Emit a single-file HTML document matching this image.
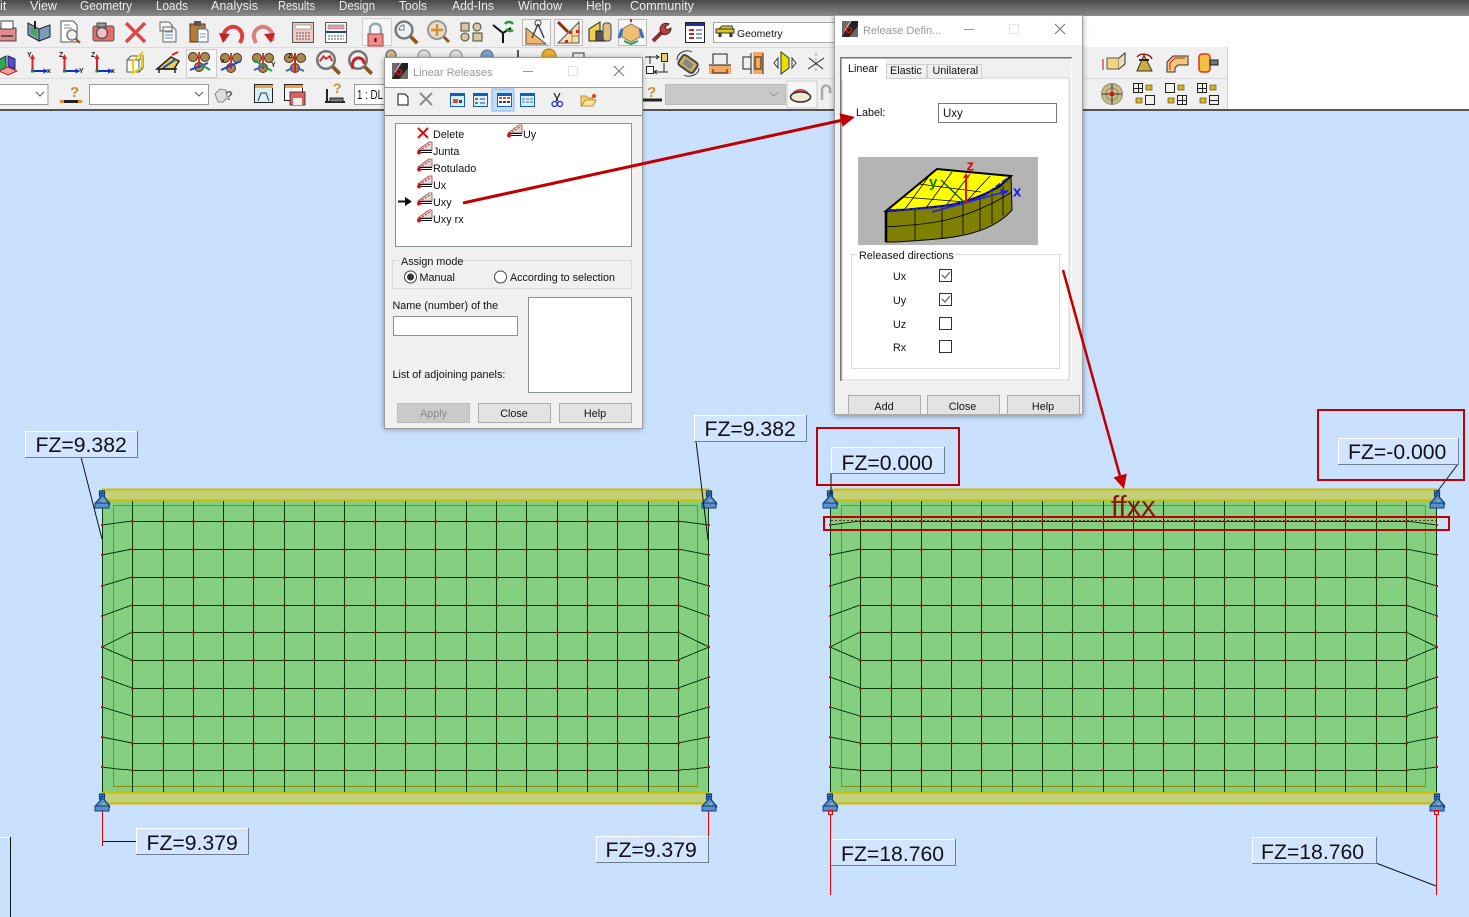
<!DOCTYPE html>
<html><head><meta charset="utf-8"><title>Linear Releases</title>
<style>
html,body{margin:0;padding:0;background:#cae0ff;overflow:hidden}
svg{display:block;font-family:"Liberation Sans",sans-serif}
.m{font-size:12.7px;fill:#ececec}
.t{font-size:10.8px;fill:#111}
.g{font-size:11px;fill:#9a9a9a}
.l{font-size:21.2px;fill:#111}
.a{font-size:7px;font-weight:bold;fill:#222}
.cr{shape-rendering:crispEdges}
</style></head><body>
<svg width="1469" height="917" viewBox="0 0 1469 917" xmlns="http://www.w3.org/2000/svg">
<defs>
<linearGradient id="bar" x1="0" y1="0" x2="0" y2="1"><stop offset="0" stop-color="#484848"/><stop offset="1" stop-color="#8c8c8c"/></linearGradient>
<g id="sup">
<path d="M-2.500-9h5v5h-1l6 7v1.500h-14V3l6-7h-2z" fill="#5b8fc9" stroke="#0b3f86" stroke-width="1.200"/>
<rect x="-7" y="3" width="14" height="5" fill="#5b8fc9" stroke="#0b3f86" stroke-width="1.200" class="cr"/><path d="M0 1h3" stroke="#e6d040" class="cr"/>
<path d="M-2.500-6.500h5M0-9v5" stroke="#0b3f86" class="cr"/>
</g>
<g id="mesh">
<rect x="102" y="500" width="607" height="292" fill="#85d080"/>
<rect x="102.500" y="489.500" width="606" height="11" fill="#c4cf7e" stroke="#c8be00" stroke-width="2" class="cr"/>
<rect x="102.500" y="792.500" width="606" height="11" fill="#c4cf7e" stroke="#c8be00" stroke-width="2" class="cr"/>
<rect x="113.500" y="505.500" width="584" height="281" fill="none" stroke="#8a8a10" class="cr"/>
<path class="cr" fill="none" stroke="#003a08" d="M102.500 501V792M708.500 501V792M132.500 501V792M163.500 501V792M193.500 501V792M223.500 501V792M253.500 501V792M284.500 501V792M314.500 501V792M344.500 501V792M375.500 501V792M405.500 501V792M435.500 501V792M466.500 501V792M496.500 501V792M526.500 501V792M557.500 501V792M587.500 501V792M617.500 501V792M648.500 501V792M678.500 501V792M132 521.500H679M132 549.500H679M132 577.500H679M132 605.500H679M132 632.500H679M132 660.500H679M132 688.500H679M132 716.500H679M132 743.500H679M132 770.500H679M102 525 132 521M102 555 132 549M102 586 132 577M102 616 132 605M102 647 132 632M102 647 132 660M102 677 132 688M102 707 132 716M102 737 132 743M102 767 117 769 132 770M709 525 678 521M709 555 678 549M709 586 678 577M709 616 678 605M709 647 678 632M709 647 678 660M709 677 678 688M709 707 678 716M709 737 678 743M709 767 694 769 678 770"/>
<path class="cr" fill="none" stroke="#f00000" stroke-width="2" stroke-dasharray="2.400 27.950" d="M131.200 521.500H680M131.200 549.500H680M131.200 577.500H680M131.200 605.500H680M131.200 632.500H680M131.200 660.500H680M131.200 688.500H680M131.200 716.500H680M131.200 743.500H680M131.200 770.500H680"/>
<path class="cr" fill="none" stroke="#f00000" stroke-width="2" d="M101 525h2M101 555h2M101 586h2M101 616h2M101 647h2M101 677h2M101 707h2M101 737h2M101 767h2M708 525h2M708 555h2M708 586h2M708 616h2M708 647h2M708 677h2M708 707h2M708 737h2M708 767h2"/>
<use href="#sup" x="102" y="500"/><use href="#sup" x="709" y="500"/><use href="#sup" x="102" y="803"/><use href="#sup" x="709" y="803"/>
</g>
<g id="mag"><path d="M4 4l7 7" stroke="#8a5a20" stroke-width="3"/><circle r="7" fill="#eef3f6" stroke="#777" stroke-width="2"/></g>
<g id="ax"><path d="M0 0V-14" stroke="#e02020" stroke-width="2"/><path d="M-2.500-12L0-17l2.500 5z" fill="#e02020"/><path d="M0 0H13" stroke="#1030d0" stroke-width="2"/><path d="M11-2.500L16 0l-5 2.500z" fill="#1030d0"/><rect x="-1.500" y="-1.500" width="3" height="3" fill="#0a9030"/></g>
<g id="gears"><circle cx="-6" cy="-5" r="4.500" fill="#a88a50" stroke="#4a3010"/><circle cx="6" cy="-5" r="4.500" fill="#a88a50" stroke="#4a3010"/><circle cx="0" cy="5" r="4.500" fill="#a88a50" stroke="#4a3010"/><path d="M0-10V6" stroke="#e02020" stroke-width="1.800"/></g>
<g id="rel"><path d="M1 8L12 0h3v8z" fill="#dcdcdc" stroke="#a04040" stroke-width=".8"/><path d="M2 8.500H15M2 10.500H15" stroke="#111" stroke-width="1"/><path d="M5 7l8-5" stroke="#e02020" stroke-dasharray="2 1.500"/><circle cx="2" cy="10.500" r="2" fill="#e01010"/></g>
<g id="dlgi"><rect width="16" height="16" fill="#6a6a6a"/><path d="M0 16L9 0h7v5L7 16z" fill="#222"/><path d="M3 9L9 0" stroke="#ddd"/><circle cx="7" cy="9" r="2.500" fill="none" stroke="#e01010" stroke-width="1.600"/></g>
<g id="split"><g fill="none" stroke="#222" class="cr"><rect x="-10.500" y="-10.500" width="9" height="9"/><rect x="1.500" y="1.500" width="9" height="9"/></g><rect x="2" y="-9" width="6" height="5" fill="#d8b030" stroke="#6a5010" stroke-width=".7"/><rect x="-8" y="4" width="6" height="5" fill="#d8b030" stroke="#6a5010" stroke-width=".7"/></g>
</defs>

<rect width="1469" height="917" fill="#cae0ff"/>

<!-- toolbars -->
<rect y="16" width="1469" height="94" fill="#fff"/>
<rect y="16" width="836" height="31" fill="#f0f0f0"/>
<rect y="47" width="1228" height="63" fill="#f0f0f0"/>
<path class="cr" d="M0 47.500H836M0 78.500H1228" stroke="#dcdcdc"/>
<path class="cr" d="M1227.500 47V110" stroke="#d0d0d0"/>
<rect y="109" width="1469" height="2" fill="#555"/>
<rect width="1469" height="16" fill="url(#bar)"/>
<g lengthAdjust="spacingAndGlyphs">
<text class="m" x="0" y="10">it</text>
<text class="m" x="30" y="10" textLength="27" lengthAdjust="spacingAndGlyphs">View</text>
<text class="m" x="80" y="10" textLength="52" lengthAdjust="spacingAndGlyphs">Geometry</text>
<text class="m" x="156" y="10" textLength="32" lengthAdjust="spacingAndGlyphs">Loads</text>
<text class="m" x="211" y="10" textLength="47" lengthAdjust="spacingAndGlyphs">Analysis</text>
<text class="m" x="278" y="10" textLength="37" lengthAdjust="spacingAndGlyphs">Results</text>
<text class="m" x="339" y="10" textLength="36" lengthAdjust="spacingAndGlyphs">Design</text>
<text class="m" x="399" y="10" textLength="28" lengthAdjust="spacingAndGlyphs">Tools</text>
<text class="m" x="452" y="10" textLength="42" lengthAdjust="spacingAndGlyphs">Add-Ins</text>
<text class="m" x="518" y="10" textLength="44" lengthAdjust="spacingAndGlyphs">Window</text>
<text class="m" x="586" y="10" textLength="25" lengthAdjust="spacingAndGlyphs">Help</text>
<text class="m" x="630" y="10" textLength="64" lengthAdjust="spacingAndGlyphs">Community</text>
</g>

<!-- row 1 -->
<g>
<rect x="362.500" y="18.500" width="29" height="27" fill="#f6f6f6" stroke="#d0d0d0" class="cr"/>
<rect x="522.500" y="19.500" width="28" height="26" fill="#f6f6f6" stroke="#bbb" class="cr"/><rect x="554.500" y="19.500" width="28" height="26" fill="#f6f6f6" stroke="#bbb" class="cr"/><rect x="618.500" y="19.500" width="28" height="26" fill="#f6f6f6" stroke="#bbb" class="cr"/>
<rect x="-2" y="28" width="18" height="13" fill="#e48a8a" stroke="#444"/><rect x="1" y="21" width="12" height="8" fill="#fff" stroke="#444"/><rect x="1" y="35" width="12" height="2" fill="#555"/>
<path d="M39 41L28 35V23l11 6zM39 41l11-4V25l-11 4z" fill="#7b9cb8" stroke="#222"/><path d="M31 27l6 3v7l-6-3z" fill="#50a060"/><path d="M35 21v8" stroke="#222" stroke-width="2"/>
<path d="M61 21h12l4 4v17H61z" fill="#fff" stroke="#555"/><path d="M64 25h6M64 28h8" stroke="#888"/><g transform="translate(72 35) scale(.72)"><use href="#mag"/></g>
<rect x="93" y="26" width="21" height="15" rx="2" fill="#e66c6c" stroke="#555"/><rect x="97" y="23" width="9" height="4" fill="#999" stroke="#444"/><circle cx="102" cy="33" r="5.500" fill="#f3c0c0" stroke="#555" stroke-width="1.500"/>
<path d="M126 23l19 19M145 23l-19 19" stroke="#e04848" stroke-width="3.500"/>
<path d="M160 22h9l3 3v6h-12zM163 27h10l3 3v12h-13z" fill="#f4f4f4" stroke="#666"/><path d="M165 32h8M165 35h8M165 38h8" stroke="#7b8ea8"/>
<rect x="190" y="24" width="15" height="18" fill="#b77b3a" stroke="#4a3010"/><rect x="194" y="21" width="7" height="5" fill="#555"/><path d="M198 29h8l2 2v11h-10z" fill="#fff" stroke="#4a6a8a"/><path d="M200 34h6M200 37h6" stroke="#7b8ea8"/>
<path d="M224 41c-4-14 14-20 18-7 1 3-1 7-2 9" fill="none" stroke="#d84040" stroke-width="4"/><path d="M219 33l11 1-7 9z" fill="#c02828"/>
<path d="M272 41c4-14-14-20-18-7-1 3 1 7 2 9" fill="none" stroke="#d88080" stroke-width="4"/><path d="M275 33l-11 1 7 9z" fill="#c02828"/>
<rect x="292.500" y="22.500" width="21" height="20" fill="#f2c8c8" stroke="#555" class="cr"/><rect x="295" y="25" width="16" height="4" fill="#fff" stroke="#777" stroke-width=".6"/><path d="M296 33h14M296 36h14M296 39h14" stroke="#555" stroke-dasharray="2 1"/>
<rect x="325.500" y="22.500" width="21" height="20" fill="#fff" stroke="#555" class="cr"/><rect x="328" y="25" width="16" height="4" fill="#e8a0a0" stroke="#777" stroke-width=".6"/><path d="M326 32h20" stroke="#2040a0" stroke-width="2"/><path d="M328 36h16M328 39h16" stroke="#555" stroke-dasharray="2 1"/>
<path d="M370 35v-6c0-7 11-7 11 0v6" fill="none" stroke="#98a8b0" stroke-width="2.500"/><rect x="368" y="34" width="15" height="12" fill="#ec8c8c" stroke="#a04040"/><rect x="374.500" y="38" width="2" height="4" fill="#600"/>
<g transform="translate(404 30) scale(1.200)"><use href="#mag"/></g><path d="M399 30a5 5 0 0 1 5-5v5z" fill="none" stroke="#777"/>
<g transform="translate(437 30)"><path d="M5 5l7 7" stroke="#8a5a20" stroke-width="3"/><circle r="9" fill="#e8dccd" stroke="#999" stroke-width="2"/><path d="M-6 0H6M0-6V6" stroke="#d8902a" stroke-width="2.500"/></g>
<g fill="#d8c8a0" stroke="#444"><rect x="461" y="23" width="8" height="8"/><circle cx="477" cy="27" r="4"/><circle cx="465" cy="37" r="4"/><rect x="473" y="33" width="9" height="8"/></g>
<path d="M493 25l10 8 8-5M503 33v10" fill="none" stroke="#111" stroke-width="2"/><path d="M505 24a5 5 0 0 1 8 0" fill="none" stroke="#20a030" stroke-width="2.500"/><path d="M513 30a5 5 0 0 1-7-1" fill="none" stroke="#20a030" stroke-width="2.500"/>
<path d="M526 44V28l20 16z" fill="#f2b868" stroke="#555"/><path d="M538 24l-6 14M538 24l6 14" stroke="#444" stroke-width="1.500"/><circle cx="538" cy="23" r="3" fill="none" stroke="#444"/>
<path d="M558 43l21-21v21z" fill="#f3e0b0" stroke="#555"/><path d="M558 22l10 10" stroke="#8a3010" stroke-width="3"/><path d="M572 36h7M572 29v14" stroke="#a88040"/><g fill="#e02020"><rect x="569" y="31" width="3" height="3"/><rect x="576" y="30" width="3" height="3"/><rect x="565" y="40" width="3" height="3"/></g>
<path d="M589 41V29l11-7v19z" fill="#f0d050" stroke="#222"/><rect x="596" y="31" width="9" height="10" fill="#555" stroke="#222"/><rect x="603" y="23" width="8" height="18" rx="3" fill="#e0c080" stroke="#444"/>
<path d="M631 24l-9 5v8l9 5 9-5v-8z" fill="#f0c070" stroke="#777"/><path d="M622 29l-3 9M640 29l3 9" stroke="#3070d0" stroke-width="3"/><path d="M624 41l7 3 7-3" stroke="#30a040" stroke-width="2" fill="none"/><path d="M631 22v-3" stroke="#e02020" stroke-width="2"/>
<path d="M653 41l9-9" stroke="#8a3030" stroke-width="4"/><path d="M660 30c0-6 5-8 9-6l-4 3 2 3 4-2c0 5-5 8-9 6z" fill="#b84040" stroke="#502020"/>
<rect x="685.500" y="22.500" width="19" height="20" fill="#fff" stroke="#222" class="cr"/><rect x="686" y="23" width="18" height="3" fill="#2030a0"/><path d="M689 30h5M689 34h5M689 38h5" stroke="#d02020" stroke-width="2"/><path d="M696 30h6M696 34h6M696 38h6" stroke="#2030a0"/>
<rect x="713.500" y="22.500" width="130" height="20" fill="#fff" stroke="#aaa" class="cr"/>
<path d="M719 29l3-3h10l1 3z" fill="#e0d030" stroke="#333"/><rect x="716" y="29" width="18" height="4" fill="#d8c820" stroke="#333"/><path d="M720 33v4M731 33v4" stroke="#333" stroke-width="3"/>
<text x="737" y="37" style="font-size:10.400px" fill="#111">Geometry</text>
</g>

<!-- row 2 -->
<g>
<rect x="186.500" y="49.500" width="30" height="28" fill="#f6f6f6" stroke="#ccc" class="cr"/>
<path d="M-2 60l8-4v12l-8 3z" fill="#30a850" stroke="#226"/><path d="M8 56l7 3v10l-7-3z" fill="#5050d0" stroke="#226"/><path d="M-1 71l9-4 9 4-9 4z" fill="#f0a0a0" stroke="#c02020"/>
<use href="#ax" x="32.500" y="71"/><text class="a" x="27" y="57">Y</text><text class="a" x="47" y="73">x</text>
<use href="#ax" x="64.500" y="71"/><text class="a" x="59" y="57">Z</text><text class="a" x="79" y="73">Y</text>
<use href="#ax" x="97" y="71"/><text class="a" x="91" y="57">Z</text><text class="a" x="111" y="73">x</text>
<path d="M127 60h12v12h-12zM139 60l4-4v12l-4 4M127 60l4-4h12" fill="#fff" stroke="#555"/><path d="M133 61l9-8v14l-9 6z" fill="none" stroke="#e8d020" stroke-width="2"/>
<path d="M157 69l14-12 8 4-5 8z" fill="#f0d040" stroke="#222" stroke-width="1.500"/><path d="M163 68l13-9" stroke="#2050d0" stroke-width="2"/><path d="M172 55l6-3" stroke="#e02020" stroke-width="2"/><path d="M157 69h20M159 69v4M175 69v4" stroke="#222" stroke-width="1.500"/>
<use href="#gears" x="199" y="62"/><path d="M190 70l18-7" stroke="#2040d0" stroke-width="2"/><path d="M202 65l8 5" stroke="#20a040" stroke-width="2"/>
<use href="#gears" x="231" y="63"/><path d="M221 70l20-9" stroke="#2040d0" stroke-width="2"/><text class="a" x="221" y="63">x</text>
<use href="#gears" x="263" y="63"/><path d="M254 60l18 11" stroke="#20a040" stroke-width="2"/><path d="M254 70l10-4" stroke="#5060d0" stroke-width="2"/><text class="a" x="271" y="67">Y</text>
<use href="#gears" x="295" y="63"/><path d="M295 54V73" stroke="#e02020" stroke-width="2"/><path d="M286 71l7-3M304 71l-7-3" stroke="#4060c0" stroke-width="2"/><text class="a" x="288" y="58">Z</text>
<g transform="translate(326 60) scale(1.250)"><use href="#mag"/><path d="M-5 1l3-4 2 2 3-2 2 4" fill="none" stroke="#e02020" stroke-width="1.500"/></g>
<g transform="translate(358 60) scale(1.250)"><use href="#mag"/><path d="M-4 7c-3-9 8-12 9-4" fill="none" stroke="#d02020" stroke-width="2.500"/></g>
<circle cx="391" cy="55" r="5" fill="#cdb78e" stroke="#555"/>
<circle cx="424" cy="56" r="6" fill="#ddd" stroke="#888"/><circle cx="456" cy="56" r="6" fill="#ddd" stroke="#888"/><circle cx="487" cy="56" r="6" fill="#7aa0d0" stroke="#666"/><path d="M518 50v7" stroke="#555" stroke-width="2"/><circle cx="549" cy="56" r="7" fill="#e8b030" stroke="#a07010"/><rect x="573" y="53" width="11" height="5" fill="none" stroke="#333"/>
<path d="M645 57h13M656 55l3 2-3 2M668 72h-13M657 70l-3 2 3 2M650 56v8M664 63v9" stroke="#222" fill="none"/><rect x="661.500" y="53.500" width="6" height="8" fill="#e8d070" stroke="#222" class="cr"/><rect x="646.500" y="66.500" width="7" height="7" fill="#fff" stroke="#222" class="cr"/>
<g transform="translate(688 64) rotate(35)"><rect x="-9" y="-6" width="18" height="12" rx="3" fill="#c8b060" stroke="#444" stroke-width="2"/><rect x="-5" y="-3" width="10" height="6" fill="#888"/></g><path d="M677 60c0-8 10-11 15-8M699 68c0 7-10 10-15 7" fill="none" stroke="#333"/>
<rect x="709" y="65" width="22" height="9" fill="#f6a860"/><path d="M713 64V54h14v10M709 65h22M713 69v4h14v-4" fill="none" stroke="#222"/>
<rect x="753" y="52" width="10" height="22" fill="#f6a860"/><path d="M743 57h8v12h-8zM755 57h6v12h-6z" fill="none" stroke="#222"/><path d="M751 53v21M763 53v21" stroke="#222"/>
<path d="M781 52l8 6v10l-8 6z" fill="#e8e000" stroke="#333"/><path d="M778 58l-4 5 4 5zM792 58l4 5-4 5z" fill="#fff" stroke="#333"/>
<path d="M816 53v20" stroke="#999" stroke-dasharray="3 2"/><path d="M808 69l16-11M809 58l14 11" stroke="#222"/>
<rect x="1107" y="58" width="12" height="11" fill="#ecd880" stroke="#555"/><path d="M1119 58l6-5v11l-6 5" fill="#e8e0c0" stroke="#333"/><path d="M1103 59v11" stroke="#902020"/>
<path d="M1137 71l7-16 8 16z" fill="#c8b040" stroke="#333"/><path d="M1137 57c4-5 13-3 15 2" fill="none" stroke="#a02020" stroke-width="1.500"/><path d="M1139 60h10" stroke="#402020" stroke-width="2"/>
<path d="M1167 72V62l6-6h15v9h-10l-3 3v4z" fill="#f4c878" stroke="#333"/><path d="M1170 70v-7l5-5h10" fill="none" stroke="#c02020"/>
<rect x="1199" y="54" width="11" height="18" rx="3" fill="#f0c040" stroke="#e03020" stroke-width="1.500"/><rect x="1210" y="60" width="8" height="5" fill="#777" stroke="#222"/>
</g>

<!-- row 3 -->
<g>
<rect x="-3" y="84.500" width="51" height="20" fill="#fff" stroke="#999" class="cr"/><path d="M36 92l4 4 4-4" fill="none" stroke="#555"/>
<rect x="60" y="100" width="22" height="3" fill="#222"/><rect x="60" y="100" width="4" height="3" fill="#e8902a"/><rect x="78" y="100" width="4" height="3" fill="#e8902a"/><text x="70" y="97" style="font-size:15px;font-weight:bold" fill="#d09020">?</text>
<rect x="89.500" y="84.500" width="119" height="20" fill="#fff" stroke="#999" class="cr"/><path d="M195 92l4 4 4-4" fill="none" stroke="#555"/>
<path d="M215 94l5-5 6 1 1 8-4 4h-5z" fill="#ddd" stroke="#888"/><text x="225" y="100" style="font-size:13px;font-weight:bold" fill="#666">?</text>
<rect x="254.500" y="84.500" width="18" height="18" fill="#d8eef8" stroke="#222" class="cr"/><rect x="255" y="85" width="18" height="3" fill="#f0a040"/><path d="M258 101l3-8h5l3 8" fill="none" stroke="#333"/>
<rect x="284.500" y="84.500" width="18" height="16" fill="#f6f6f6" stroke="#222" class="cr"/><rect x="285" y="85" width="18" height="3" fill="#f0a040"/><rect x="290" y="92" width="15" height="13" fill="#e06060" stroke="#444"/><rect x="293" y="98" width="9" height="7" fill="#eee"/>
<path d="M325 102h20M327 89v13" stroke="#222" stroke-width="2"/><rect x="330" y="98" width="13" height="4" fill="#777" stroke="#222"/><text x="333" y="93" style="font-size:14px;font-weight:bold" fill="#d09020">?</text>
<rect x="354.500" y="84.500" width="40" height="20" fill="#fff" stroke="#999" class="cr"/><text x="357" y="99" style="font-size:12.500px" fill="#111" textLength="26" lengthAdjust="spacingAndGlyphs">1 : DL</text>
<path d="M643 100h19" stroke="#222" stroke-width="3"/><text x="647" y="97" style="font-size:15px;font-weight:bold" fill="#d09020">?</text>
<rect x="665.500" y="84.500" width="120" height="20" fill="#c8c8c8" stroke="#bbb" class="cr"/><path d="M770 92l4 4 4-4" fill="none" stroke="#999"/>
<rect x="787" y="81" width="30" height="27" fill="#f6f6f6" stroke="#ccc"/><path d="M792 95a9 8 0 0 1 17 0z" fill="#f06060" stroke="#a02020"/><ellipse cx="800.500" cy="97" rx="10" ry="5" fill="#f0e8d0" stroke="#333" stroke-width="1.600"/>
<path d="M822 100V90c0-6 8-6 8 0v3" fill="none" stroke="#aaa" stroke-width="2.500"/>
<circle cx="1112" cy="94" r="10.500" fill="#c8bc80" stroke="#888"/><circle cx="1112" cy="94" r="6" fill="none" stroke="#888"/><path d="M1102 94h20M1112 84v20" stroke="#333"/><rect x="1110" y="92" width="4" height="4" fill="#e01010"/>
<use href="#split" x="1144" y="94"/><use href="#split" x="1176" y="94"/><use href="#split" x="1208" y="94"/>
<path class="cr" d="M1133 88.500h10M1138.500 83v10M1177 100.500h10M1182.500 95v10M1197 88.500h10M1202.500 83v10M1209 100.500h10" stroke="#222"/>
</g>

<!-- canvas panels -->
<use href="#mesh"/>
<use href="#mesh" x="728"/>
<path d="M831 520.500H1437" stroke="#902020" stroke-dasharray="2 2" class="cr"/>

<!-- leader lines -->
<g fill="none" stroke="#111">
<path d="M81 457L102 539M696 441L708 540M831 473V495M1458 464L1437 492M102 841.500H136M1376 863L1436 886"/>
</g>
<g stroke="#f00000" fill="none">
<path d="M102.500 811V846M708.500 811V848M830.500 815V895M1436.500 815V895"/>
<rect x="828.500" y="810.500" width="4" height="4"/><rect x="1434.500" y="810.500" width="4" height="4"/>
</g>
<path d="M10.500 837V917" stroke="#111" class="cr" fill="none"/>
<path d="M0 837.500H10" stroke="#fff" class="cr"/>

<!-- labels -->
<g fill="#d2e4ff" stroke="none">
<rect x="25" y="431" width="112" height="26"/><rect x="694" y="415" width="112" height="26"/><rect x="831" y="447" width="113" height="26"/><rect x="1338" y="438" width="120" height="26"/><rect x="136" y="828" width="112" height="26"/><rect x="596" y="836" width="112" height="26"/><rect x="831" y="839" width="124" height="26"/><rect x="1252" y="837" width="124" height="26"/>
</g>
<g class="cr" fill="none" stroke="#fff">
<path d="M25.500 457V431.500H137M694.500 441V415.500H806M831.500 473V447.500H944M1338.500 464V438.500H1458M136.500 854V828.500H248M596.500 862V836.500H708M831.500 865V839.500H955M1252.500 863V837.500H1376"/>
</g>
<g class="cr" fill="none" stroke="#6f7f90">
<path d="M25 457.500H137.500V431M694 441.500H806.500V415M831 473.500H944.500V447M1338 464.500H1458.500V438M136 854.500H248.500V828M596 862.500H708.500V836M831 865.500H955.500V839M1252 863.500H1376.500V837"/>
</g>
<text class="l" x="35.500" y="452">FZ=9.382</text>
<text class="l" x="704.500" y="436">FZ=9.382</text>
<text class="l" x="841.500" y="470">FZ=0.000</text>
<text class="l" x="1348" y="459">FZ=-0.000</text>
<text class="l" x="146.500" y="850">FZ=9.379</text>
<text class="l" x="605.500" y="857">FZ=9.379</text>
<text class="l" x="841" y="861">FZ=18.760</text>
<text class="l" x="1261" y="859">FZ=18.760</text>

<!-- red annotations -->
<g fill="none" stroke="#c00000" stroke-width="2" class="cr">
<rect x="817" y="428" width="142" height="57"/>
<rect x="1318" y="410" width="146" height="70"/>
<rect x="824" y="517" width="625" height="13"/>
</g>
<text x="1111" y="516" style="font-size:29px" fill="#8a1414">ffxx</text>

<!-- dialog: Linear Releases -->
<g style="filter:drop-shadow(0 1px 3px rgba(0,0,0,.4))">
<rect x="384" y="57" width="258" height="371" fill="#f0f0f0"/>
</g>
<rect x="384.500" y="57.500" width="258" height="371" fill="#f0f0f0" stroke="#9a9a9a" class="cr"/>
<rect x="385" y="58" width="257" height="29" fill="#fff"/>
<path class="cr" d="M385 87.500H642" stroke="#9a9a9a"/>
<path class="cr" d="M385 115.500H642" stroke="#777"/>
<use href="#dlgi" x="392" y="63"/>
<text class="g" x="413" y="76">Linear Releases</text>
<path class="cr" d="M523 71.500H533" stroke="#999"/>
<rect x="568.500" y="66.500" width="9" height="9" fill="none" stroke="#e0e0e0" class="cr"/>
<path d="M614 66l10 10M624 66l-10 10" stroke="#777" stroke-width="1.100"/>
<!-- dialog toolbar -->
<path d="M398 94h7l3 3v8h-10z" fill="#fff" stroke="#111"/>
<path d="M420 93l12 12M432 93l-12 12" stroke="#8a8a8a" stroke-width="2"/>
<rect x="492" y="89" width="22" height="22" fill="#c4ddf6" stroke="#88b8e6"/>
<g class="cr">
<rect x="450.500" y="93.500" width="14" height="13" fill="#dcecff" stroke="#1060c0"/><rect x="450" y="93" width="15" height="3" fill="#1060c0"/><rect x="453" y="99" width="5" height="4" fill="#e05020"/><rect x="459" y="100" width="3" height="3" fill="#204080"/>
<rect x="473.500" y="93.500" width="14" height="13" fill="#dcecff" stroke="#1060c0"/><rect x="473" y="93" width="15" height="3" fill="#1060c0"/><rect x="475" y="98" width="3" height="2" fill="#e05020"/><rect x="475" y="102" width="3" height="2" fill="#30a040"/><path d="M480 99h5M480 103h5" stroke="#204080"/>
<rect x="497.500" y="93.500" width="14" height="13" fill="#fff" stroke="#1060c0"/><rect x="497" y="93" width="15" height="3" fill="#1060c0"/><path d="M499 98h3M503 98h3M507 98h3" stroke="#e05020" stroke-width="2"/><path d="M499 102h3M503 102h3M507 102h3" stroke="#204080" stroke-width="2"/>
<rect x="520.500" y="93.500" width="14" height="13" fill="#dcecff" stroke="#1060c0"/><rect x="520" y="93" width="15" height="3" fill="#1060c0"/><path d="M522 99h11M522 102h11" stroke="#4070c0" stroke-dasharray="3 1"/>
</g>
<path d="M554 93l4 8M560 93l-4 8" stroke="#222" stroke-width="1.200"/><circle cx="554.500" cy="104" r="2.500" fill="none" stroke="#2030c0" stroke-width="1.300"/><circle cx="560" cy="104" r="2.500" fill="none" stroke="#2030c0" stroke-width="1.300"/>
<path d="M581 96h5l2 2h5v8h-12z" fill="#f4d070" stroke="#b89030"/><path d="M582 106l3-6h11l-3 6z" fill="#fbe69c" stroke="#b89030"/><circle cx="594" cy="96" r="2" fill="#e84020"/>
<!-- list -->
<rect x="395.500" y="123.500" width="236" height="123" fill="#fff" stroke="#8a8f98" class="cr"/>
<path d="M418 128l10 10M428 128l-10 10" stroke="#e01010" stroke-width="2"/>
<text class="t" x="433" y="138">Delete</text>
<use href="#rel" x="417" y="142"/><text class="t" x="433" y="155">Junta</text>
<use href="#rel" x="417" y="159"/><text class="t" x="433" y="172">Rotulado</text>
<use href="#rel" x="417" y="176"/><text class="t" x="433" y="189">Ux</text>
<use href="#rel" x="417" y="193"/><text class="t" x="433" y="206">Uxy</text>
<use href="#rel" x="417" y="210"/><text class="t" x="433" y="223">Uxy rx</text>
<use href="#rel" x="507" y="125"/><text class="t" x="523" y="138">Uy</text>
<path d="M398 201.500h8" stroke="#111" stroke-width="2"/><path d="M405 197l7 4.500-7 4.500z" fill="#111"/>
<!-- assign -->
<rect x="392.500" y="260.500" width="239" height="28" fill="none" stroke="#dcdcdc" class="cr"/>
<rect x="399" y="256" width="62" height="8" fill="#f0f0f0"/>
<text class="t" x="401" y="265">Assign mode</text>
<circle cx="410.500" cy="277" r="6" fill="#fff" stroke="#444"/><circle cx="410.500" cy="277" r="3.500" fill="#333"/>
<text class="t" x="419.500" y="281">Manual</text>
<circle cx="500.500" cy="277" r="6" fill="#fff" stroke="#444"/>
<text class="t" x="510" y="281" textLength="105" lengthAdjust="spacingAndGlyphs">According to selection</text>
<text class="t" x="392.500" y="309">Name (number) of the</text>
<rect x="393.500" y="316.500" width="124" height="19" fill="#fff" stroke="#8a8f98" class="cr"/>
<rect x="528.500" y="297.500" width="103" height="95" fill="#fff" stroke="#8a8f98" class="cr"/>
<text class="t" x="392.500" y="378">List of adjoining panels:</text>
<g class="cr" stroke="#adadad">
<rect x="397.500" y="403.500" width="72" height="19" fill="#cacaca" stroke="#bdbdbd"/>
<rect x="478.500" y="403.500" width="72" height="19" fill="#e3e3e3"/>
<rect x="559.500" y="403.500" width="72" height="19" fill="#e3e3e3"/>
</g>
<text class="t" x="433.500" y="417" text-anchor="middle" style="fill:#8a8a8a">Apply</text>
<text class="t" x="514" y="417" text-anchor="middle">Close</text>
<text class="t" x="595" y="417" text-anchor="middle">Help</text>

<!-- dialog: Release Definition -->
<g style="filter:drop-shadow(0 1px 3px rgba(0,0,0,.4))">
<rect x="834" y="15" width="249" height="400" fill="#f0f0f0"/>
</g>
<rect x="834.500" y="15.500" width="248" height="399" fill="#f0f0f0" stroke="#a4a4a4" class="cr"/>
<rect x="835" y="16" width="247" height="29" fill="#fff"/>
<use href="#dlgi" x="842" y="21"/>
<text class="g" x="863" y="34">Release Defin...</text>
<path class="cr" d="M964 29.500H974" stroke="#999"/>
<rect x="1009.500" y="24.500" width="9" height="9" fill="none" stroke="#e4e4e4" class="cr"/>
<path d="M1055 24l10 10M1065 24l-10 10" stroke="#777" stroke-width="1.100"/>
<!-- tabs -->
<path class="cr" d="M840.500 381V57.500H1072" fill="none" stroke="#777" stroke-width="1.500"/>
<rect x="842" y="78" width="227" height="302" fill="#fff" stroke="#d4d4d4"/>
<path class="cr" d="M840 381.500H1072M1071.500 58V381" stroke="#fafafa"/>
<g class="cr"><rect x="886.500" y="64.500" width="40" height="14" fill="#f0f0f0" stroke="#d0d0d0"/><rect x="927.500" y="64.500" width="54" height="14" fill="#f0f0f0" stroke="#d0d0d0"/><rect x="842" y="59" width="44" height="21" fill="#fff"/></g>
<text class="t" x="848" y="72">Linear</text>
<text class="t" x="890" y="74">Elastic</text>
<text class="t" x="932.500" y="74">Unilateral</text>
<text class="t" x="856" y="116">Label:</text>
<rect x="938.500" y="103.500" width="118" height="19" fill="#fff" stroke="#777" class="cr"/>
<text class="t" x="943" y="117" style="font-size:11.500px">Uxy</text>
<!-- picture -->
<rect x="858" y="157" width="180" height="88" fill="#b4b4b4"/>
<path d="M886 211V242H895C930 240 955 238 972 233 992 228 1005 218 1012 210L1011 176 965 203z" fill="#808000" stroke="#000" stroke-width="1"/>
<path d="M886 211L937 169 1011 176 1000 186C985 195 970 201 950 205 925 208 905 210 886 211z" fill="#ffff00" stroke="#000" stroke-width="2"/>
<path d="M886 211v31" stroke="#000" stroke-width="2.500"/>
<path d="M886 227C920 224 960 225 1012 192M915 210v30M942 207v32M963 204v30M980 199v32M992 193v31M1003 186v30M903 197L965 202M919 184L981 192M932 172L905 209M952 172L926 208M970 174L945 207M990 176L965 203" fill="none" stroke="#000" stroke-width=".8"/>
<path d="M888 210C925 210 960 205 985 195L1008 178" fill="none" stroke="#1818f0" stroke-width="2" stroke-dasharray="6 2"/>
<path d="M932 212L1008 191" stroke="#2020f0" stroke-width="1.500"/><path d="M1000 189l9 2-7 5z" fill="#2020f0"/>
<path d="M966 203V175" stroke="#f00" stroke-width="2"/><path d="M963 178l3-5 3 5z" fill="#f00"/>
<path d="M965 203L941 180" stroke="#106010" stroke-width="1.500"/>
<text x="966.500" y="170.500" style="font-size:15px;font-weight:bold" fill="#f00000">z</text>
<text x="1013" y="196.500" style="font-size:15px;font-weight:bold" fill="#1818f0">x</text>
<text x="929" y="187" style="font-size:15px;font-weight:bold" fill="#108010">y</text>
<!-- released directions -->
<rect x="851.500" y="254.500" width="208" height="114" fill="none" stroke="#dcdcdc" class="cr"/>
<rect x="857" y="250" width="98" height="8" fill="#fff"/>
<text class="t" x="859" y="259">Released directions</text>
<text class="t" x="893" y="280">Ux</text><text class="t" x="893" y="304">Uy</text><text class="t" x="893" y="328">Uz</text><text class="t" x="893" y="351">Rx</text>
<g class="cr" fill="#fff" stroke="#333"><rect x="939.500" y="269.500" width="12" height="12"/><rect x="939.500" y="293.500" width="12" height="12"/><rect x="939.500" y="317.500" width="12" height="12"/><rect x="939.500" y="340.500" width="12" height="12"/></g>
<path d="M942 275l3 3 5-6M942 299l3 3 5-6" fill="none" stroke="#666" stroke-width="1.300"/>
<g class="cr" stroke="#adadad" fill="#e3e3e3">
<rect x="848.500" y="395.500" width="72" height="19"/><rect x="927.500" y="395.500" width="72" height="19"/><rect x="1007.500" y="395.500" width="72" height="19"/>
</g>
<text class="t" x="884" y="410" text-anchor="middle">Add</text>
<text class="t" x="962.500" y="410" text-anchor="middle">Close</text>
<text class="t" x="1043" y="410" text-anchor="middle">Help</text>

<!-- arrows -->
<path d="M463 203L843 120" stroke="#c00000" stroke-width="3" fill="none"/>
<path d="M855 117L839.500 113.200 842.500 126.800z" fill="#c00000"/>
<path d="M1063 270L1120 476" stroke="#c00000" stroke-width="2.500" fill="none"/>
<path d="M1124 489L1126.900 473.600 1113.500 477.400z" fill="#c00000"/>
</svg>
</body></html>
